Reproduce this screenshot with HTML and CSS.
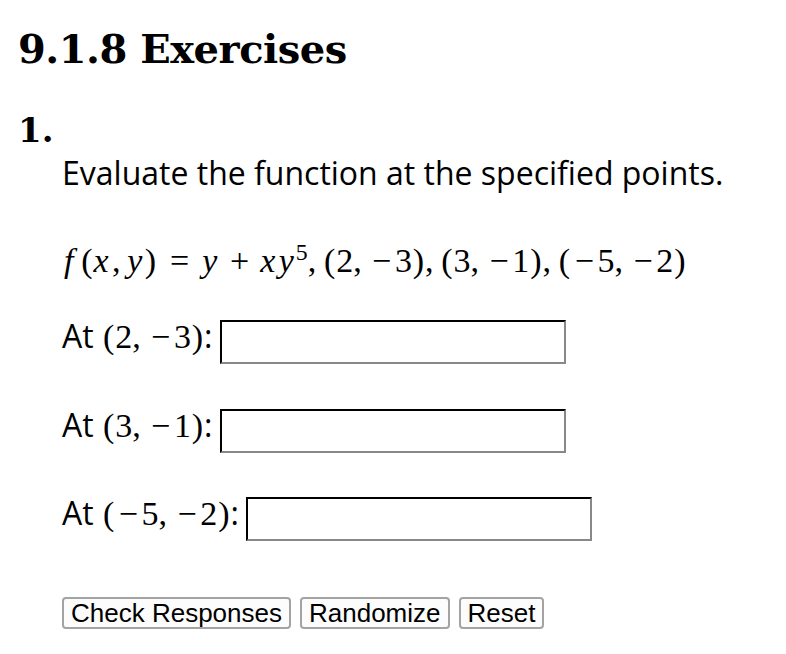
FILE: index.html
```html
<!DOCTYPE html>
<html>
<head>
<meta charset="utf-8">
<link rel="stylesheet" href="styles.css">
</head>
<body>
<main class="page">
  <h2 class="title">9.1.8 Exercises</h2>
  <section class="exercise">
    <h3 class="num">1.</h3>
    <div class="body">
      <p class="intro">Evaluate the function at the specified points.</p>
      <p class="formula"><span class="math"><i class="vf">f</i><span class="p">(</span><i class="vx">x</i><span class="c">,</span><i class="vy">y</i><span class="p">)</span><span class="rel">=</span><i class="vy">y</i><span class="bin">+</span><i class="vx">x</i><i class="vy">y</i><sup>5</sup><span class="c">,</span><span class="p">(</span>2<span class="c">,</span><span class="neg">−</span>3<span class="p">)</span><span class="c">,</span><span class="p">(</span>3<span class="c">,</span><span class="neg">−</span>1<span class="p">)</span><span class="c">,</span><span class="p">(</span><span class="neg">−</span>5<span class="c">,</span><span class="neg">−</span>2<span class="p">)</span></span></p>
      <div class="answers">
        <label class="row"><span class="lbl">At <span class="math"><span class="p">(</span>2<span class="c">,</span><span class="neg">−</span>3<span class="p">)</span></span>:</span><input class="box" type="text"></label>
        <label class="row"><span class="lbl">At <span class="math"><span class="p">(</span>3<span class="c">,</span><span class="neg">−</span>1<span class="p">)</span></span>:</span><input class="box" type="text"></label>
        <label class="row"><span class="lbl">At <span class="math"><span class="p">(</span><span class="neg">−</span>5<span class="c">,</span><span class="neg">−</span>2<span class="p">)</span></span>:</span><input class="box" type="text"></label>
      </div>
      <div class="buttons">
        <button class="btn">Check Responses</button>
        <button class="btn">Randomize</button>
        <button class="btn">Reset</button>
      </div>
    </div>
  </section>
</main>
</body>
</html>
```
FILE: styles.css
```css
html, body {
  margin: 0;
  padding: 0;
  background: #fff;
  color: #000;
}
.page {
  padding: 22px 0 0 18px;
}
.title {
  margin: 0;
  font-family: "DejaVu Serif", "Liberation Serif", serif;
  font-weight: bold;
  font-size: 40px;
  line-height: 54px;
  letter-spacing: -0.5px;
}
.exercise {
  margin-top: 35px;
}
.num {
  margin: 0;
  font-family: "DejaVu Serif", "Liberation Serif", serif;
  font-weight: bold;
  font-size: 34px;
  line-height: 38px;
}
.body {
  padding-left: 44px;
  font-family: "Open Sans", "Noto Sans", sans-serif;
  font-size: 32px;
}
.intro {
  margin: 2px 0 0;
  line-height: 44px;
}
.formula {
  margin: 41px 0 0;
  line-height: 48px;
  white-space: nowrap;
}
.math {
  font-family: "Liberation Serif", "DejaVu Serif", serif;
  font-size: 34px;
  white-space: nowrap;
}
.math i {
  font-style: italic;
}
.vf {
  margin-left: 0.06em;
  margin-right: 0.2em;
}
.vx {
  margin-right: 0.1em;
}
.vy {
  margin-right: 0.04em;
}
.p {
  margin: 0 0.028em;
}
.c {
  margin-right: 0.2em;
}
.rel {
  margin: 0 0.385em;
}
.bin {
  margin: 0 0.33em;
}
.neg {
  margin: 0 0.107em;
}
.math sup {
  font-size: 0.7em;
  line-height: 0;
  vertical-align: 0.5em;
  margin-left: 0.02em;
}
.answers {
  display: flex;
  flex-direction: column;
  gap: 44.5px;
  margin-top: 35px;
}
.row {
  display: flex;
  align-items: flex-start;
  gap: 7px;
}
.lbl {
  line-height: 32px;
}
.box {
  width: 346px;
  height: 44px;
  box-sizing: border-box;
  border: 2px inset #767676;
  border-top-color: #333;
  border-left-color: #333;
  border-bottom-color: #888;
  border-right-color: #888;
  padding: 0;
  margin: 0;
  font-size: 24px;
  background: #fff;
}
.buttons {
  display: flex;
  gap: 9px;
  margin-top: 56px;
}
.btn {
  font-family: "Liberation Sans", Arial, sans-serif;
  font-size: 26px;
  height: 32px;
  box-sizing: border-box;
  padding: 0 7px;
  background: #fcfcfc;
  border: 2px solid #a3a3a3;
  border-radius: 4px;
  color: #000;
  line-height: 28px;
}
```
